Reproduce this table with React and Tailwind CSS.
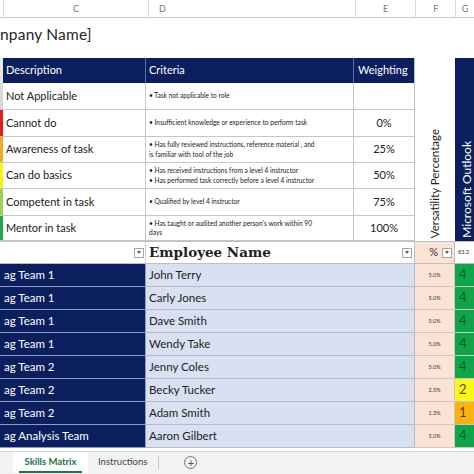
import React from "react";

const levels = [
  { strip: "bg-[#d9d9d9]", desc: "Not Applicable", criteria: ["• Task not applicable to role"], weight: "", h: "h-[27px]" },
  { strip: "bg-[#e41d1d]", desc: "Cannot do", criteria: ["• Insufficient knowledge or experience to perform task"], weight: "0%", h: "h-[27px]" },
  { strip: "bg-[#f7a823]", desc: "Awareness of task", criteria: ["• Has fully reviewed instructions, reference material , and", "is familiar with tool of the job"], weight: "25%", h: "h-[26px]" },
  { strip: "bg-[#f5f21a]", desc: "Can do basics", criteria: ["• Has received instructions from a level 4 instructor", "• Has performed task correctly before a level 4 instructor"], weight: "50%", h: "h-[26px]" },
  { strip: "bg-[#9ccf57]", desc: "Competent in task", criteria: ["• Qualified by level 4 instructor"], weight: "75%", h: "h-[27px]" },
  { strip: "bg-[#1ea84c]", desc: "Mentor in task", criteria: ["• Has taught or audited another person's work within 90", "days"], weight: "100%", h: "h-[25px]" },
];

const employees = [
  { team: "ag Team 1", name: "John Terry", pct: "5.0%", score: 4 },
  { team: "ag Team 1", name: "Carly Jones", pct: "5.0%", score: 4 },
  { team: "ag Team 1", name: "Dave Smith", pct: "5.0%", score: 4 },
  { team: "ag Team 1", name: "Wendy Take", pct: "5.0%", score: 4 },
  { team: "ag Team 2", name: "Jenny Coles", pct: "5.0%", score: 4 },
  { team: "ag Team 2", name: "Becky Tucker", pct: "2.5%", score: 2 },
  { team: "ag Team 2", name: "Adam Smith", pct: "1.3%", score: 1 },
  { team: "ag Analysis Team", name: "Aaron Gilbert", pct: "5.0%", score: 4 },
];

const scoreStyle = {
  4: "bg-[#0fa64a] text-[#0b5a26]",
  2: "bg-[#fbf719] text-[#5c5200]",
  1: "bg-[#fbb312] text-[#6b3a00]",
};

const FilterButton = () => (
  <div className="w-[10px] h-[10px] bg-white border border-[#a6a6a6] flex items-center justify-center">
    <div className="w-0 h-0 border-l-[2.5px] border-r-[2.5px] border-t-[3px] border-l-transparent border-r-transparent border-t-[#555]" />
  </div>
);

const App = () => {
  return (
    <div className="w-[474px] h-[474px] overflow-hidden bg-white font-['Lato',sans-serif] text-[#222] relative">

      {/* Column letters */}
      <div className="flex h-[18px] border-b border-[#c8c8c8] text-[9px] text-[#777]">
        <div className="w-[146px] flex items-center justify-center border-l border-[#dadada] ml-[3px]">C</div>
        <div className="w-[208px] flex items-center pl-[10px] border-l border-[#dadada]">D</div>
        <div className="w-[61px] flex items-center justify-center border-l border-[#dadada]">E</div>
        <div className="w-[40px] flex items-center justify-center border-l border-[#dadada]">F</div>
        <div className="w-[19px] flex items-center justify-center border-l border-[#dadada]">G</div>
      </div>

      {/* Company name */}
      <div className="h-[40px] pt-[6px] text-[15.5px] leading-[20px] text-[#262626] tracking-[0.2px]">
        npany Name]
      </div>

      {/* Competency table + rotated headers */}
      <div className="flex">
        <div className="w-[415px] border-r border-[#bfbfbf]">
          <div className="flex h-[25px] text-white text-[11px]">
            <div className="w-[3px] bg-[#e6e6e6]" />
            <div className="w-[143px] bg-[#0b1f5e] flex items-center pl-[3px] border-r border-[#5a6fa8]">Description</div>
            <div className="w-[208px] bg-[#0b1f5e] flex items-center pl-[3px] border-r border-[#5a6fa8]">Criteria</div>
            <div className="flex-1 bg-[#0b1f5e] flex items-center pl-[4px]">Weighting</div>
          </div>
          {levels.map((l) => (
            <div key={l.desc} className={`flex ${l.h} border-b border-[#c6c6c6]`}>
              <div className={`w-[3px] ${l.strip}`} />
              <div className="w-[143px] flex items-center pl-[3px] text-[11px] border-r border-[#c6c6c6]">{l.desc}</div>
              <div className="w-[208px] flex flex-col justify-center pl-[3px] text-[6.6px] leading-[9.5px] text-[#222] border-r border-[#c6c6c6]">
                {l.criteria.map((c) => (
                  <div key={c}>{c}</div>
                ))}
              </div>
              <div className="flex-1 flex items-center justify-center text-[11px]">{l.weight}</div>
            </div>
          ))}
        </div>
        <div className="w-[40px] flex items-end justify-center pb-[3px]">
          <span className="[writing-mode:vertical-rl] rotate-180 text-[11.5px] text-[#222]">Versatility Percentage</span>
        </div>
        <div className="w-[19px] bg-[#0b1f5e] flex items-end justify-start pl-[3px] pb-[3px]">
          <span className="[writing-mode:vertical-rl] rotate-180 text-[12px] text-white">Microsoft Outlook</span>
        </div>
      </div>

      {/* Filter header row */}
      <div className="flex h-[23px] border-t border-b border-[#bfbfbf]">
        <div className="w-[146px] flex items-center justify-end pr-[1px] border-r border-[#d0d0d0]">
          <FilterButton />
        </div>
        <div className="w-[269px] flex items-center justify-between pl-[3px] pr-[2px] border-r border-[#bfbfbf]">
          <span className="font-['DejaVu_Serif',serif] font-bold text-[13.5px]">Employee Name</span>
          <FilterButton />
        </div>
        <div className="w-[40px] bg-[#fbe3d5] flex items-center justify-end gap-[4px] pr-[2px] border-r border-[#bfbfbf]">
          <span className="text-[11px] text-[#333]">%</span>
          <FilterButton />
        </div>
        <div className="w-[19px] flex items-center pl-[3px] text-[5.5px] text-[#333]">83.3</div>
      </div>

      {/* Employee rows */}
      {employees.map((e) => (
        <div key={e.name} className="flex h-[23px]">
          <div className="w-[146px] bg-[#0b1f5e] text-white text-[11.5px] flex items-center pl-[4px] border-b border-r border-[#8a9cc8]">{e.team}</div>
          <div className="w-[269px] bg-[#d9e0f1] text-[11.5px] flex items-center pl-[3px] border-b border-r border-[#b3bbcf]">{e.name}</div>
          <div className="w-[40px] bg-[#fbe3d5] text-[5.5px] text-[#333] flex items-center justify-center border-b border-r border-[#d5c4ba]">{e.pct}</div>
          <div className={`w-[19px] ${scoreStyle[e.score]} text-[13px] flex items-center pl-[4px] border-b border-[#c8c8c8]`}>{e.score}</div>
        </div>
      ))}

      {/* Sheet tabs */}
      <div className="absolute left-0 right-0 bottom-0 h-[23px] bg-[#f2f2f2] border-t border-[#d6d6d6] flex items-start text-[9.5px]">
        <div className="ml-[13px] h-[21px] w-[75px] bg-white flex items-center justify-center relative">
          <span className="font-bold text-[#217346]">Skills Matrix</span>
          <div className="absolute left-[6px] right-[6px] bottom-0 h-[2px] bg-[#217346]" />
        </div>
        <div className="h-[21px] flex items-center pl-[10px] text-[#444]">Instructions</div>
        <div className="ml-[11px] mt-[4px] h-[13px] w-px bg-[#c8c8c8]" />
        <div className="ml-[25px] mt-[4px] w-[13px] h-[13px] rounded-full border border-[#777] flex items-center justify-center text-[#555] text-[11px] leading-none">+</div>
      </div>
    </div>
  );
};

export default App;
